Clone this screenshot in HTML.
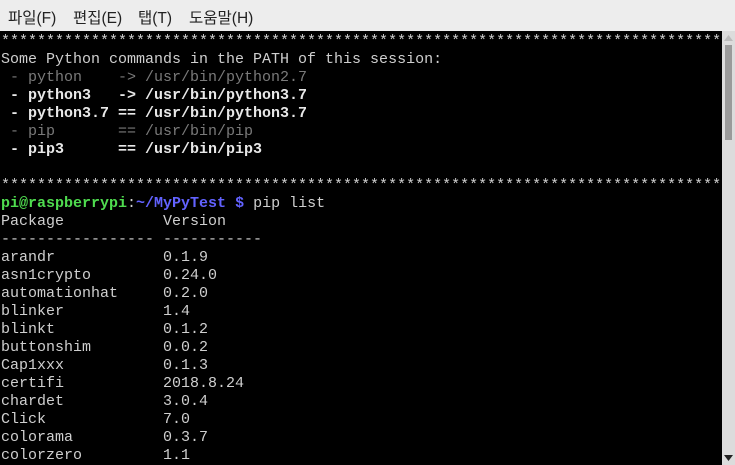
<!DOCTYPE html>
<html><head><meta charset="utf-8"><style>
html,body{margin:0;padding:0;width:735px;height:465px;overflow:hidden;background:#000}
.menu{position:absolute;left:0;top:0;width:735px;height:31px;background:#ededed;font-family:"Liberation Sans","Noto Sans CJK KR",sans-serif;font-size:15.5px;color:#222}
.menu span{position:absolute;top:6px}
.term{position:absolute;left:0;top:31px;width:722px;height:434px;background:#000;overflow:hidden}
pre{margin:0;padding-top:2px;padding-left:1px;font-family:"Liberation Mono",monospace;font-size:15px;line-height:18px;color:#cfcfcf;letter-spacing:0}
.d{color:#7a7a7a}.b{font-weight:bold;color:#e8e8e8}
.g{color:#4fdc4f;font-weight:bold}.u{color:#6262ff;font-weight:bold}
.sb{position:absolute;left:722px;top:31px;width:13px;height:434px;background:#dcdcdc}
.th{position:absolute;left:3px;top:14px;width:7px;height:95px;background:#9a9a9a}
</style></head><body>
<div class="menu"><span style="left:8px">파일(F)</span><span style="left:73px">편집(E)</span><span style="left:138px">탭(T)</span><span style="left:189px">도움말(H)</span></div>
<div class="term"><pre>********************************************************************************
Some Python commands in the PATH of this session:
<span class="d"> - python    -&gt; /usr/bin/python2.7</span>
<span class="b"> - python3   -&gt; /usr/bin/python3.7</span>
<span class="b"> - python3.7 == /usr/bin/python3.7</span>
<span class="d"> - pip       == /usr/bin/pip</span>
<span class="b"> - pip3      == /usr/bin/pip3</span>

********************************************************************************
<span class="g">pi@raspberrypi</span>:<span class="u">~/MyPyTest $</span> pip list
Package           Version
----------------- -----------
arandr            0.1.9
asn1crypto        0.24.0
automationhat     0.2.0
blinker           1.4
blinkt            0.1.2
buttonshim        0.0.2
Cap1xxx           0.1.3
certifi           2018.8.24
chardet           3.0.4
Click             7.0
colorama          0.3.7
colorzero         1.1
</pre></div>
<div class="sb"><div class="th"></div>
<svg style="position:absolute;left:2px;top:4px" width="9" height="6"><path d="M0 6L4.5 0L9 6Z" fill="#bbb"/></svg>
<svg style="position:absolute;left:2px;top:424px" width="9" height="6"><path d="M0 0L4.5 6L9 0Z" fill="#222"/></svg>
</div>
</body></html>
